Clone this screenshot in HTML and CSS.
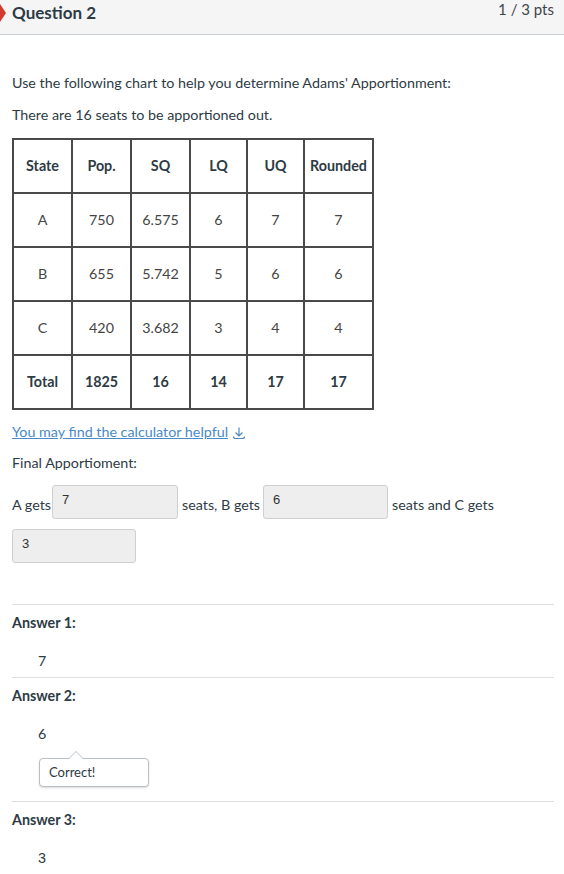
FILE: index.html
```html
<!DOCTYPE html>
<html>
<head>
<meta charset="utf-8">
<link rel="stylesheet" href="styles.css">
</head>
<body>
<div class="header">
  <span class="flag"></span>
  <span class="qtitle">Question 2</span>
  <span class="pts">1 / 3 pts</span>
</div>
<div class="content">
  <p class="p1">Use the following chart to help you determine Adams' Apportionment:</p>
  <p class="p2">There are 16 seats to be apportioned out.</p>
  <table class="chart">
    <colgroup>
      <col style="width:59px"><col style="width:59px"><col style="width:59px"><col style="width:57px"><col style="width:57px"><col style="width:69px">
    </colgroup>
    <tr class="bold"><td>State</td><td>Pop.</td><td>SQ</td><td>LQ</td><td>UQ</td><td>Rounded</td></tr>
    <tr><td>A</td><td>750</td><td>6.575</td><td>6</td><td>7</td><td>7</td></tr>
    <tr><td>B</td><td>655</td><td>5.742</td><td>5</td><td>6</td><td>6</td></tr>
    <tr><td>C</td><td>420</td><td>3.682</td><td>3</td><td>4</td><td>4</td></tr>
    <tr class="bold"><td>Total</td><td>1825</td><td>16</td><td>14</td><td>17</td><td>17</td></tr>
  </table>
  <p class="linkline"><a class="calc" href="#">You may find the calculator helpful</a><svg class="dl" width="14" height="14" viewBox="0 0 14 14"><path d="M7 1.5 V10 M3.5 6.5 L7 10 L10.5 6.5" fill="none" stroke="#4a8ac7" stroke-width="1.2"/><path d="M1.5 10.5 Q1.5 12.5 3.5 12.5 H10.5 Q12.5 12.5 12.5 10.5" fill="none" stroke="#4a8ac7" stroke-width="1.2"/></svg></p>
  <p class="final">Final Apportioment:</p>
  <div class="fill">
    <span class="lbl">A gets</span>
    <span class="box w1">7</span>
    <span class="lbl">seats, B gets</span>
    <span class="box w2">6</span>
    <span class="lbl">seats and C gets</span>
    <span class="box w3">3</span>
  </div>
  <div class="answer a1">
    <div class="alabel">Answer 1:</div>
    <div class="aval">7</div>
  </div>
  <div class="answer a2">
    <div class="alabel">Answer 2:</div>
    <div class="aval">6</div>
    <div class="tip">Correct!</div>
  </div>
  <div class="answer a3">
    <div class="alabel">Answer 3:</div>
    <div class="aval arial">3</div>
  </div>
</div>
</body>
</html>
```

FILE: styles.css
```css
html, body {
  margin: 0;
  padding: 0;
  background: #fff;
}
body {
  font-family: Lato, "Open Sans", sans-serif;
  font-size: 14.3px;
  color: #2d3b45;
  width: 564px;
  overflow: hidden;
}
.header {
  height: 34px;
  background: #f5f5f5;
  border-bottom: 1px solid #c7cdd1;
  display: flex;
  align-items: flex-start;
  box-sizing: content-box;
}
.flag {
  width: 6px;
  height: 18px;
  margin-top: 4px;
  background: #d23b2e;
  clip-path: polygon(0 0, 0 100%, 100% 50%);
  flex: none;
}
.qtitle {
  margin-left: 6px;
  margin-top: 3px;
  font-size: 17px;
  font-weight: bold;
  line-height: 20px;
  color: #2d3b45;
}
.pts {
  margin-left: auto;
  margin-right: 10px;
  margin-top: 0;
  font-size: 15px;
  line-height: 19px;
  color: #3d454c;
}
.content {
  padding: 0 11px 0 12px;
}
p {
  margin: 0;
  line-height: 20px;
}
.p1 { margin-top: 38px; }
.p2 { margin-top: 12px; }
.chart {
  margin-top: 13px;
  border-collapse: collapse;
  table-layout: fixed;
  width: 361px;
  color: #444;
}
.chart td {
  border: 2px solid #4a4a4a;
  height: 52px;
  padding: 0;
  text-align: center;
  vertical-align: middle;
  line-height: 20px;
}
.chart tr.bold td {
  font-weight: bold;
  color: #2d3b45;
}
.linkline {
  margin-top: 12px;
  display: flex;
  align-items: center;
}
.calc {
  color: #4a8ac7;
  text-decoration: underline;
}
.dl { margin-left: 4px; margin-top: 1px; }
.final { margin-top: 11px; }
.fill {
  margin-top: 12px;
  display: flex;
  flex-wrap: wrap;
  align-items: center;
  row-gap: 10px;
}
.lbl {
  position: relative;
  top: 2px;
}
.box {
  box-sizing: border-box;
  height: 34px;
  margin: 0 4px 0 1px;
  background: #eeeeee;
  border: 1px solid #cfcfcf;
  border-radius: 3px;
  padding: 7px 0 0 9px;
  font-family: "Liberation Sans", Arial, sans-serif;
  font-size: 13px;
  line-height: 14px;
  color: #333;
}
.w1 { width: 126px; }
.w2 { width: 125px; margin-left: 3px; }
.w3 { width: 124px; margin-left: 0; }
.answer {
  border-top: 1px solid #dcdfe1;
  padding-top: 8px;
}
.a1 { margin-top: 41px; width: 542px; }
.a2, .a3 { width: 542px; }
.alabel {
  font-weight: bold;
  line-height: 20px;
}
.aval {
  margin-top: 18px;
  padding-left: 26px;
  line-height: 20px;
  height: 26px;
}
.arial { font-family: "Liberation Sans", Arial, sans-serif; }
.a2 .aval { height: 20px; }
.tip {
  position: relative;
  margin: 14px 0 14px 27px;
  width: 110px;
  height: 29px;
  box-sizing: border-box;
  border: 1px solid #b9c0c6;
  border-radius: 4px;
  background: #fff;
  box-shadow: 0 1px 2px rgba(0,0,0,0.15);
  padding-left: 9px;
  font-size: 13px;
  line-height: 27px;
  color: #2d3b45;
}
.tip::before {
  content: "";
  position: absolute;
  left: 28px;
  top: -8px;
  width: 0;
  height: 0;
  border-left: 8px solid transparent;
  border-right: 8px solid transparent;
  border-bottom: 8px solid #b9c0c6;
}
.tip::after {
  content: "";
  position: absolute;
  left: 29px;
  top: -7px;
  width: 0;
  height: 0;
  border-left: 7px solid transparent;
  border-right: 7px solid transparent;
  border-bottom: 7px solid #fff;
}
```
